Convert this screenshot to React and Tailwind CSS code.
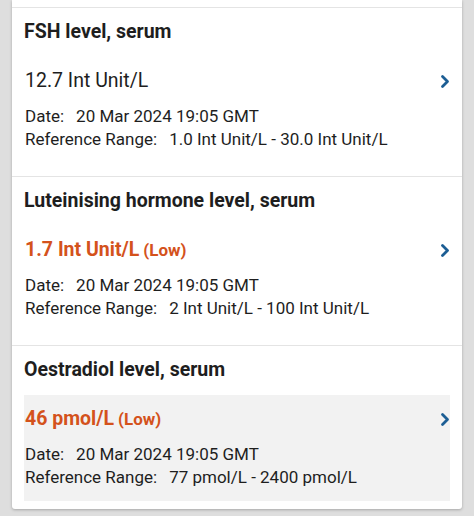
const results = [
  {
    title: "FSH level, serum",
    value: "12.7 Int Unit/L",
    low: false,
    date: "20 Mar 2024 19:05 GMT",
    range: "1.0 Int Unit/L - 30.0 Int Unit/L",
  },
  {
    title: "Luteinising hormone level, serum",
    value: "1.7 Int Unit/L",
    low: true,
    date: "20 Mar 2024 19:05 GMT",
    range: "2 Int Unit/L - 100 Int Unit/L",
  },
  {
    title: "Oestradiol level, serum",
    value: "46 pmol/L",
    low: true,
    date: "20 Mar 2024 19:05 GMT",
    range: "77 pmol/L - 2400 pmol/L",
    active: true,
  },
];

const Chevron = () => (
  <svg width="10" height="15" viewBox="0 0 10 15" className="text-[#1c5e94]">
    <polyline
      points="2.5,2.5 7.5,7.5 2.5,12.5"
      fill="none"
      stroke="currentColor"
      strokeWidth="2.8"
      strokeLinecap="round"
      strokeLinejoin="round"
    />
  </svg>
);

const ResultItem = ({ item, last }) => (
  <div className={`border-t border-[#e4e4e4] px-3 pt-3 ${last ? "pb-2" : "pb-[13px]"}`}>
    <h2 className="text-[19.5px] leading-6 font-bold text-[#1e1e1e]">{item.title}</h2>
    <div
      className={`mt-[13px] py-3 flex items-start justify-between ${
        item.active ? "bg-[#f2f2f2]" : ""
      }`}
    >
      <div className="pl-px">
        <p
          className={`text-[19.5px] leading-6 ${
            item.low ? "text-[#d4521c] font-bold" : "text-[#1e1e1e]"
          }`}
        >
          {item.value}
          {item.low && <span className="text-[17px] ml-1">(Low)</span>}
        </p>
        <div className="mt-3 text-[17px] leading-[23px] text-[#1e1e1e]">
          <p>
            <span className="mr-3">Date:</span>
            {item.date}
          </p>
          <p>
            <span className="mr-3">Reference Range:</span>
            {item.range}
          </p>
        </div>
      </div>
      <div className="h-6 flex items-center">
        <Chevron />
      </div>
    </div>
  </div>
);

export default function App() {
  return (
    <div
      className="w-[474px] h-[516px] overflow-hidden bg-[#dedede] px-3"
      style={{ fontFamily: "Roboto, 'Noto Sans', sans-serif" }}
    >
      <div className="bg-white shadow-[0_1px_3px_rgba(0,0,0,0.25)] rounded-b-[3px]">
        <div className="h-[7px]" />
        {results.map((item, i) => (
          <ResultItem key={item.title} item={item} last={i === results.length - 1} />
        ))}
      </div>
    </div>
  );
}
